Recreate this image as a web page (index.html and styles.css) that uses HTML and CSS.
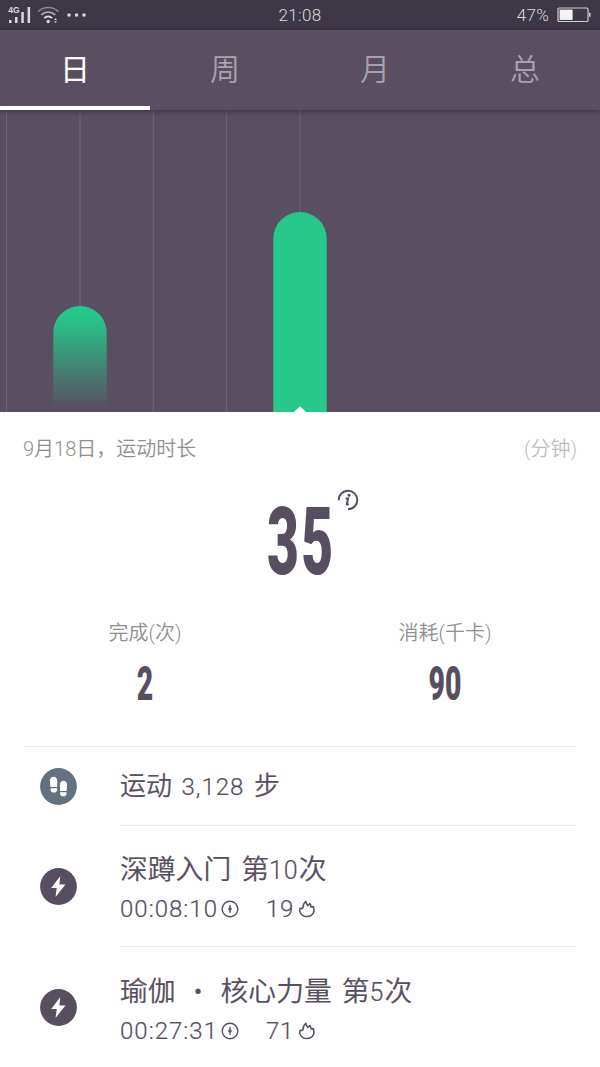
FILE: index.html
```html
<!DOCTYPE html>
<html lang="zh-CN">
<head>
    <meta charset="UTF-8">
    <meta name="viewport" content="width=device-width, initial-scale=1.0">
    <title>运动数据</title>
    <link rel="stylesheet" href="styles.css">
</head>
<body>
    <svg class="symbols" aria-hidden="true">
        <symbol id="bolt" viewBox="0 0 37 37">
            <circle cx="18.5" cy="18.5" r="18.4" fill="#574f60"/>
            <path d="M20.200 8.200 11.200 19.900h5.600l-1.300 9.100 9.900-12.600h-6z" fill="#fff"/>
        </symbol>
        <symbol id="clock" viewBox="0 0 18 18">
            <circle cx="9" cy="9" r="7.8" fill="none" stroke="#574f60" stroke-width="1.4"/>
            <path d="M9 4.8l.7 2.9 1 1.3-1 1.3L9 13.2l-.7-2.9-1-1.3 1-1.3z" fill="#574f60" stroke="#574f60" stroke-width=".5"/>
        </symbol>
        <symbol id="flame" viewBox="0 0 18 18">
            <path d="M2 8.300c1 .5 2.100.2 3-.7C4.900 5.200 5.900 3 7.900 1.300c.2 1.800.9 3.100 2.100 4.300.9-.5 1.400-1.200 1.600-2.200 1 .9 1.400 2 1.500 3.600.7 0 1.400-.1 2.100-.5 1 2.600 1.100 4.800.1 6.700-1.200 2.200-3.500 3.300-6.300 3.300-3 0-5.400-1.300-6.600-3.500-.8-1.500-.9-3.100-.4-4.700z" fill="none" stroke="#574f60" stroke-width="1.500" stroke-linejoin="round"/>
        </symbol>
    </svg>

    <div class="status-bar">
        <div class="status-left">
            <svg width="90" height="30" viewBox="0 0 90 30">
                <text x="8.300" y="13.300" class="network">4G</text>
                <g fill="#d9d7db">
                    <rect x="9" y="20" width="2.500" height="3"/>
                    <rect x="15" y="17" width="2.500" height="6"/>
                    <rect x="21.300" y="12" width="2.500" height="11"/>
                    <rect x="27.600" y="7" width="2.500" height="16"/>
                    <circle cx="48.200" cy="21.500" r="1.700"/>
                    <circle cx="69" cy="15" r="1.800"/>
                    <circle cx="76.500" cy="15" r="1.800"/>
                    <circle cx="84" cy="15" r="1.800"/>
                    <path d="M54 20l1.500-1.800L57 20zM54 21.200l1.500 1.800 1.500-1.800z"/>
                </g>
                <g fill="none" stroke-width="1.600">
                    <path d="M38 11.700c6-5.600 14.400-5.600 20.400 0" stroke="#89848e"/>
                    <path d="M41.200 14.900c4.200-3.900 9.800-3.900 14 0" stroke="#b5b2b8"/>
                    <path d="M44.200 18.100c2.500-2.200 5.500-2.200 8 0" stroke="#e3e1e5"/>
                </g>
            </svg>
        </div>
        <div class="status-time">21:08</div>
        <div class="status-right">
            <span>47%</span>
            <svg width="34" height="16" viewBox="0 0 34 16">
                <rect x="1" y="1" width="30" height="13.500" rx="1.300" fill="none" stroke="#cfcdd1" stroke-width="1.200"/>
                <rect x="2.600" y="2.600" width="13" height="10.300" fill="#f4f3f5"/>
                <path d="M32 5.800h1.600v4H32z" fill="#cfcdd1"/>
            </svg>
        </div>
    </div>

    <nav class="tabs">
        <div class="tab active">日</div>
        <div class="tab">周</div>
        <div class="tab">月</div>
        <div class="tab">总</div>
    </nav>

    <div class="chart">
        <svg width="600" height="302" viewBox="0 0 600 302">
            <defs>
                <linearGradient id="fade" x1="0" y1="0" x2="0" y2="1">
                    <stop offset="0" stop-color="#26c78b"/>
                    <stop offset=".1" stop-color="#26c78b"/>
                    <stop offset="1" stop-color="#26c78b" stop-opacity="0"/>
                </linearGradient>
            </defs>
            <path d="M6.500 0v302M80 0v196M153.300 0v302M226.600 0v302M300 0v302" stroke="#6c6474" stroke-width="1"/>
            <path d="M53.300 222.700a26.700 26.700 0 0 1 53.400 0V298H53.300z" fill="url(#fade)"/>
            <path d="M273.300 128.700a26.700 26.700 0 0 1 53.400 0V302H273.300z" fill="#26c78b"/>
            <path d="M294 302l6-5.700 6 5.700z" fill="#fff"/>
        </svg>
    </div>

    <section class="summary">
        <div class="summary-head">
            <span>9月18日，运动时长</span>
            <span class="unit">(分钟)</span>
        </div>
        <div class="total">
            <span class="total-number">35</span>
            <svg class="info" width="22" height="22" viewBox="0 0 22 22">
                <path d="M1.700 11.200A9.300 9.300 0 1 1 11 20.300" fill="none" stroke="#574f60" stroke-width="2"/>
                <path d="M8.600 9.500h2.600l-1.400 5.300q-.2 1 .7.700l1.200-.6" fill="none" stroke="#574f60" stroke-width="2"/>
                <circle cx="12" cy="6.300" r="1.500" fill="#574f60"/>
            </svg>
        </div>
        <div class="stats">
            <div class="stat">
                <div class="stat-label">完成(次)</div>
                <div class="stat-value">2</div>
            </div>
            <div class="stat">
                <div class="stat-label">消耗(千卡)</div>
                <div class="stat-value">90</div>
            </div>
        </div>
    </section>

    <section class="records">
        <div class="record steps">
            <svg class="record-icon" width="37" height="37" viewBox="0 0 37 37">
                <circle cx="18.500" cy="18.500" r="18.400" fill="#647181"/>
                <path d="M10.400 19l-.5-6c-.1-2.400 1.400-4.200 3.600-4.200s3.800 1.800 3.700 4.200l-.1 6zM10.600 20.300h6.500v1.400c0 3.800-6.500 3.800-6.500 0zM20.100 22.900l-.2-6c0-2.400 1.500-4.100 3.600-4.100s3.700 1.800 3.600 4.100l-.5 6zM20.100 24.200h6.400v1.200c0 3.800-6.400 3.800-6.400 0z" fill="#fff"/>
            </svg>
            <div class="record-body">
                <div class="record-title">运动 <span class="step-count">3,128</span> 步</div>
            </div>
        </div>
        <div class="record">
            <svg class="record-icon" width="37" height="37"><use href="#bolt"/></svg>
            <div class="record-body">
                <div class="record-title">深蹲入门 第<span class="num">10</span>次</div>
                <div class="record-meta">
                    <span class="duration">00:08:10</span>
                    <svg width="18" height="18"><use href="#clock"/></svg>
                    <span class="calories">19</span>
                    <svg width="18" height="18"><use href="#flame"/></svg>
                </div>
            </div>
        </div>
        <div class="record">
            <svg class="record-icon" width="37" height="37"><use href="#bolt"/></svg>
            <div class="record-body">
                <div class="record-title">瑜伽 <span class="dot">•</span> 核心力量 第<span class="num">5</span>次</div>
                <div class="record-meta">
                    <span class="duration">00:27:31</span>
                    <svg width="18" height="18"><use href="#clock"/></svg>
                    <span class="calories">71</span>
                    <svg width="18" height="18"><use href="#flame"/></svg>
                </div>
            </div>
        </div>
    </section>
</body>
</html>
```

FILE: styles.css
```css
* {
    box-sizing: border-box;
}
body {
    margin: 0;
    width: 600px;
    height: 1067px;
    overflow: hidden;
    background-color: #fefefe;
    color: #574f60;
    font-family: Roboto, "Noto Sans CJK SC", sans-serif;
    font-weight: 350;
}
svg {
    display: block;
    flex: none;
}
.symbols {
    display: none;
}
.status-bar {
    display: grid;
    grid-template-columns: 1fr 1fr 1fr;
    align-items: center;
    height: 30px;
    background-color: #3e3745;
    color: #dcdade;
    font-size: 17px;
    line-height: 30px;
}
.network {
    fill: #d9d7db;
    font-family: "Liberation Sans", sans-serif;
    font-size: 8.5px;
    font-weight: bold;
}
.status-time {
    text-align: center;
    letter-spacing: 0.3px;
}
.status-right {
    display: flex;
    justify-content: flex-end;
    align-items: center;
    gap: 8px;
    padding-right: 9px;
    letter-spacing: 0.3px;
}
.tabs {
    position: relative;
    display: grid;
    grid-template-columns: repeat(4, 1fr);
    height: 80px;
    background-color: #594f60;
    box-shadow: 0 1px 5px rgba(30, 20, 40, 0.55);
}
.tab {
    height: 80px;
    padding-top: 4px;
    border-bottom: 4px solid transparent;
    color: #a7a2ab;
    font-size: 30px;
    line-height: 72px;
    text-align: center;
}
.tab.active {
    border-color: #fff;
    color: #fff;
    font-weight: 400;
}
.chart {
    height: 302px;
    background-color: #594f60;
}
.summary {
    height: 334px;
    padding-top: 22px;
}
.summary-head {
    display: flex;
    justify-content: space-between;
    padding: 0 23px;
    color: #8f8f8f;
    font-size: 20px;
    line-height: 30px;
}
.unit {
    color: #bdbdbd;
}
.total {
    position: relative;
    height: 150px;
    text-align: center;
}
.total-number {
    display: inline-block;
    font-size: 95px;
    font-weight: 900;
    letter-spacing: 4px;
    line-height: 155px;
    text-indent: 4px;
    transform: scaleX(0.58);
}
.info {
    position: absolute;
    top: 25px;
    left: 337px;
}
.stats {
    display: grid;
    grid-template-columns: 290px 310px;
    text-align: center;
}
.stat-label {
    height: 36px;
    color: #8f8f8f;
    font-size: 20px;
    line-height: 38px;
}
.stat-value {
    font-size: 48px;
    font-weight: 900;
    line-height: 68px;
    transform: scaleX(0.59);
}
.records {
    margin: 0 24px;
    border-top: 1px solid #e9e9e9;
}
.record {
    display: flex;
    align-items: center;
    height: 121px;
    padding-left: 16px;
}
.record-icon {
    margin-right: 43px;
}
.record-body {
    display: flex;
    flex: 1;
    flex-direction: column;
    justify-content: center;
    height: 100%;
    padding-top: 6px;
    border-bottom: 1px solid #e9e9e9;
    -webkit-text-stroke: 0.2px #574f60;
}
.record:last-child .record-body {
    border-bottom: 0;
}
.record-title {
    font-size: 27.8px;
    line-height: 39px;
    white-space: pre;
    word-spacing: 3.2px;
}
.steps {
    height: 79px;
}
.steps .record-body {
    padding-top: 2px;
}
.steps .record-title {
    font-size: 26px;
}
.step-count {
    font-size: 24px;
    letter-spacing: 1px;
}
.num {
    font-size: 25px;
    letter-spacing: 1px;
}
.dot {
    display: inline-block;
    width: 25px;
    text-align: center;
}
.record-meta {
    display: flex;
    align-items: center;
    font-size: 24px;
    line-height: 38px;
}
.duration {
    width: 101px;
    letter-spacing: 1px;
}
.calories {
    width: 32px;
    margin-left: 27px;
    letter-spacing: 0.7px;
}
```
